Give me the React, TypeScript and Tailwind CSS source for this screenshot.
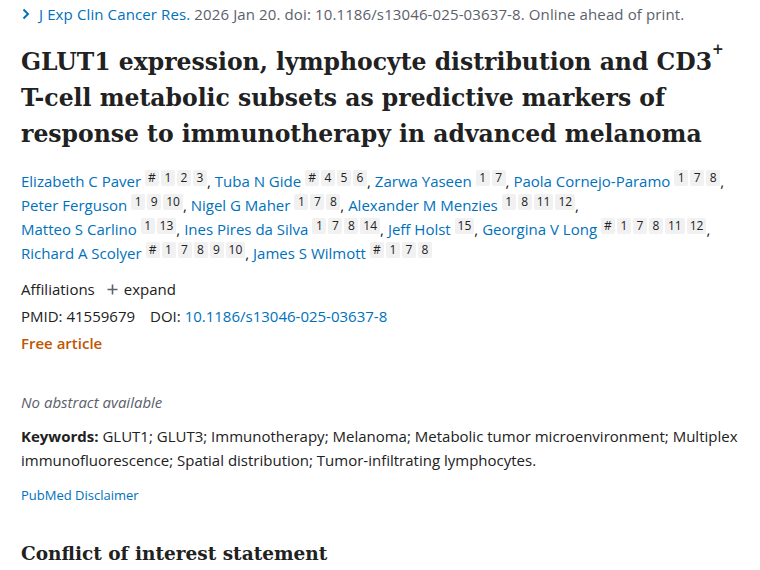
import React from "react";

const Author = ({ name, refs, comma = true }: { name: string; refs: string[]; comma?: boolean }) => (
  <span className="whitespace-nowrap">
    <span className="text-[#0071bc]">{name}</span>{" "}
    <span className="inline-flex gap-[2px] align-[5px]">
      {refs.map((r, i) => (
        <span key={i} className="inline-block min-w-[14px] text-center bg-[#f1f1f1] text-[#212121] text-[12px] leading-[16px] px-[3px] rounded-[2px]">
          {r}
        </span>
      ))}
    </span>
    {comma ? <span className="text-[#212121]">,</span> : null}
  </span>
);

export default function App() {
  const sans = "font-['Open_Sans',sans-serif]";
  return (
    <div className={`w-[760px] h-[570px] bg-white overflow-hidden ${sans} text-[#212121]`}>
      <div className="pl-[21px] pr-[20px]">
        <div className="pt-[2px] text-[15px] leading-[24px] tracking-[0.12px] text-[#5b616b] flex items-center">
          <svg width="8" height="12" viewBox="0 0 8 12" className="mr-[9px] ml-[1px]">
            <path d="M1.5 1.5 L6 6 L1.5 10.5" fill="none" stroke="#0071bc" strokeWidth="2" />
          </svg>
          <span className="text-[#0071bc]">J Exp Clin Cancer Res.</span>
          <span>&nbsp;2026 Jan 20. doi: 10.1186/s13046-025-03637-8. Online ahead of print.</span>
        </div>
        <h1 className="mt-[18px] w-[710px] font-['DejaVu_Serif',serif] font-bold text-[23.5px] leading-[36px] text-[#212121]">
          GLUT1 expression, lymphocyte distribution and CD3<sup className="text-[14px] align-[9px]">+</sup> T-cell metabolic subsets as predictive markers of response to immunotherapy in advanced melanoma
        </h1>
        <div className="mt-[17px] w-[705px] text-[15px] leading-[24px]">
          <Author name="Elizabeth C Paver" refs={["#", "1", "2", "3"]} />{" "}
          <Author name="Tuba N Gide" refs={["#", "4", "5", "6"]} />{" "}
          <Author name="Zarwa Yaseen" refs={["1", "7"]} />{" "}
          <Author name="Paola Cornejo-Paramo" refs={["1", "7", "8"]} />{" "}
          <Author name="Peter Ferguson" refs={["1", "9", "10"]} />{" "}
          <Author name="Nigel G Maher" refs={["1", "7", "8"]} />{" "}
          <Author name="Alexander M Menzies" refs={["1", "8", "11", "12"]} />{" "}
          <Author name="Matteo S Carlino" refs={["1", "13"]} />{" "}
          <Author name="Ines Pires da Silva" refs={["1", "7", "8", "14"]} />{" "}
          <Author name="Jeff Holst" refs={["15"]} />{" "}
          <Author name="Georgina V Long" refs={["#", "1", "7", "8", "11", "12"]} />{" "}
          <Author name="Richard A Scolyer" refs={["#", "1", "7", "8", "9", "10"]} />{" "}
          <Author name="James S Wilmott" refs={["#", "1", "7", "8"]} comma={false} />
        </div>
        <div className="mt-[11px] text-[15px] leading-[27px]">
          <div className="flex items-center">
            <span>Affiliations</span>
            <svg width="11" height="11" viewBox="0 0 11 11" className="ml-[12px] mr-[6px]">
              <path d="M5.5 0.5 V10.5 M0.5 5.5 H10.5" stroke="#5b616b" strokeWidth="1.6" />
            </svg>
            <span>expand</span>
          </div>
          <div>
            PMID: 41559679<span className="inline-block w-[15px]" />DOI: <span className="text-[#0071bc]">10.1186/s13046-025-03637-8</span>
          </div>
          <div className="text-[#c05600] font-semibold">Free article</div>
        </div>
        <div className="mt-[33px] text-[15px] leading-[24px] italic text-[#5b616b]">No abstract available</div>
        <div className="mt-[10px] text-[15px] leading-[24px]">
          <span className="font-bold">Keywords:</span> GLUT1; GLUT3; Immunotherapy; Melanoma; Metabolic tumor microenvironment; Multiplex immunofluorescence; Spatial distribution; Tumor-infiltrating lymphocytes.
        </div>
        <div className="mt-[13px] text-[13px] leading-[20px] text-[#0071bc]">PubMed Disclaimer</div>
        <h2 className="mt-[34px] font-['DejaVu_Serif',serif] font-bold text-[18.5px] leading-[30px]">Conflict of interest statement</h2>
      </div>
    </div>
  );
}
